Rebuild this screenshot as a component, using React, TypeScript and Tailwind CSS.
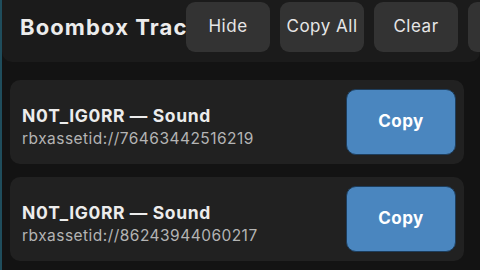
import React from "react";

const font = { fontFamily: "Inter, 'DejaVu Sans', sans-serif" };

function Row({ id }: { id: string }) {
  return (
    <div className="flex h-[84px] items-start justify-between rounded-[10px] bg-[#212121] pr-[8px] pt-[9px]">
      <div className="flex flex-col pl-[12px] pt-[15px]">
        <div className="text-[17.5px] font-bold leading-[23px] tracking-[0.035em] text-[#ececec]">N0T_IG0RR — Sound</div>
        <div className="mt-[1px] text-[15.5px] leading-[22px] tracking-[0.03em] text-[#b4b4b4]">rbxassetid://{id}</div>
      </div>
      <button className="flex h-[66px] w-[110px] items-center justify-center rounded-[10px] border border-[#1d3d5c] bg-[#4a86bf] text-[17px] font-bold tracking-[0.03em] text-white">
        Copy
      </button>
    </div>
  );
}

export default function App() {
  return (
    <div style={font} className="relative h-[270px] w-[480px] overflow-hidden border-l-2 border-[#1f4d5c] bg-[#131313]">
      <div className="flex h-[62px] items-start rounded-b-[10px] bg-[#1b1b1b]">
        <div className="flex h-[54px] w-[184px] shrink-0 items-center pl-[18px]">
          <span className="block w-[166px] overflow-hidden whitespace-nowrap text-[22px] font-bold tracking-[0.05em] text-[#ececec]">
            Boombox Tracker
          </span>
        </div>
        <div className="mt-[2px] flex gap-[10px]">
          {["Hide", "Copy All", "Clear", ""].map((t, i) => (
            <button
              key={i}
              className="flex h-[50px] w-[84px] shrink-0 items-center justify-center rounded-[9px] bg-[#333333] text-[17px] tracking-[0.03em] text-[#e6e6e6]"
            >
              {t}
            </button>
          ))}
        </div>
      </div>
      <div className="mt-[18px] flex w-[462px] flex-col gap-[13px] pl-[8px]">
        <Row id="76463442516219" />
        <Row id="86243944060217" />
      </div>
    </div>
  );
}
